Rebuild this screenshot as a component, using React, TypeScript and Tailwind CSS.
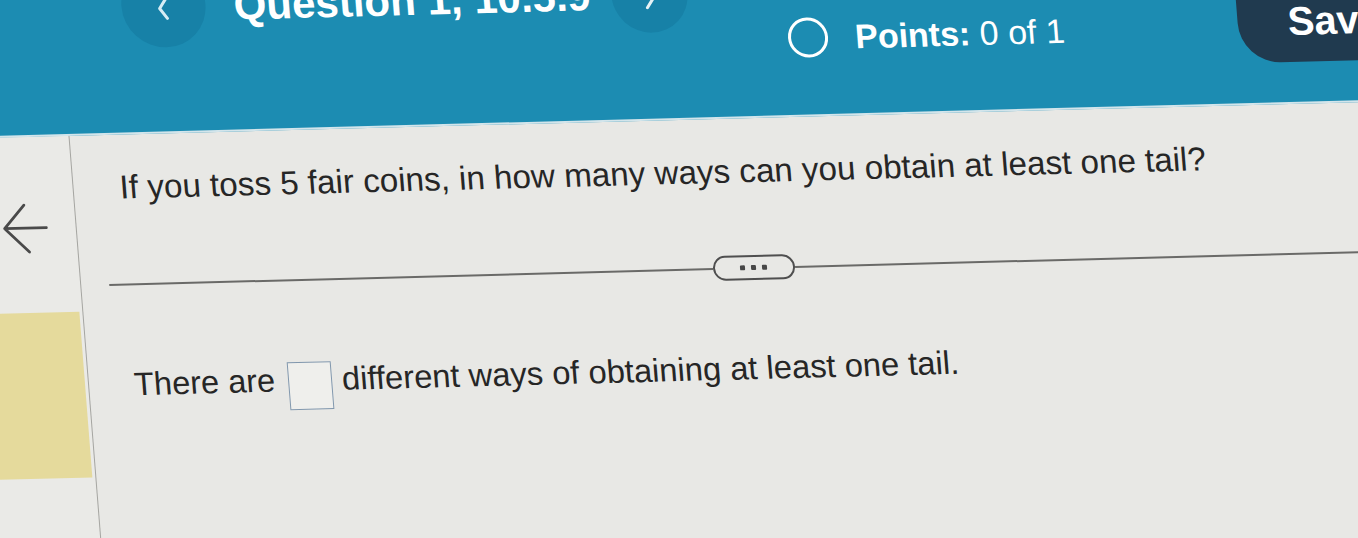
import React from "react";

export default function App() {
  return (
    <div className="w-[1358px] h-[538px] overflow-hidden bg-[#e8e8e5]">
      <div className="w-[1438px] h-[618px] -ml-[40px] -mt-[40px] rotate-[-1.5deg] skew-x-[3deg] flex flex-col font-['Liberation_Sans',Arial,sans-serif]">
        {/* Header */}
        <div className="h-[160px] shrink-0 bg-[#1c8cb2] flex items-start pl-[183px] border-b-[2px] border-[#d3e5eb]">
          <div className="w-[84px] h-[84px] -mt-[10px] rounded-full bg-[#1781a7] flex items-center justify-center shrink-0">
            <svg width="14" height="24" viewBox="0 0 14 24" className="mt-[6px]">
              <path d="M10 2 L3 12 L10 22" fill="none" stroke="#d6ecf4" strokeWidth="3" strokeLinecap="round" strokeLinejoin="round" />
            </svg>
          </div>
          <div className="w-[406px] shrink-0 pl-[28px] mt-[13px] text-[42px] leading-[42px] font-bold text-white whitespace-nowrap">
            Question 1, 10.5.9
          </div>
          <div className="w-[76px] h-[76px] -mt-[4px] rounded-full bg-[#1781a7] flex items-center justify-center shrink-0">
            <svg width="14" height="24" viewBox="0 0 14 24" className="mt-[6px]">
              <path d="M4 2 L11 12 L4 22" fill="none" stroke="#e6f2f6" strokeWidth="3" strokeLinecap="round" strokeLinejoin="round" />
            </svg>
          </div>
          <div className="ml-[97px] mt-[61px] flex items-center gap-[27px] shrink-0">
            <div className="w-[40px] h-[40px] rounded-full border-[3.5px] border-white" />
            <div className="text-[34px] leading-[34px] text-white whitespace-nowrap">
              <span className="font-bold">Points:</span> 0 of 1
            </div>
          </div>
          <div className="ml-auto w-[142px] h-[118px] rounded-bl-[40px] rounded-tl-[40px] bg-[#203a4f] pl-[50px] pt-[57px] shrink-0 overflow-hidden">
            <div className="text-[40px] leading-[40px] font-bold text-white whitespace-nowrap">Save</div>
          </div>
        </div>

        {/* Body */}
        <div className="flex-1 flex">
          <div className="w-[121px] shrink-0 border-r-[1.5px] border-[#a5a5a1] bg-[#eaeae7] flex flex-col">
            <div className="pt-[64px] pl-[46px]">
              <svg width="46" height="54" viewBox="0 0 46 54">
                <path d="M45 27 H3 M3 27 L24 4 M3 27 L26 51" fill="none" stroke="#4a4a4a" strokeWidth="2.8" strokeLinecap="round" strokeLinejoin="round" />
              </svg>
            </div>
            <div className="mt-[58px] mr-[3px] h-[166px] bg-[#e5da9c]" />
          </div>

          <div className="flex-1 flex flex-col text-[#262626]">
            <div className="pt-[36px] pl-[46px] text-[33.2px] leading-[33px] whitespace-nowrap">
              If you toss 5 fair coins, in how many ways can you obtain at least one tail?
            </div>

            <div className="mt-[68px] ml-[28px] h-[25px] flex items-center">
              <div className="flex-1 h-[2px] bg-[#6a6a68]" />
              <div className="w-[82px] h-[25px] rounded-full border-[2.5px] border-[#4f4f4f] flex items-center justify-center gap-[6px] shrink-0">
                <span className="w-[5px] h-[5px] rounded-[1px] bg-[#474747]" />
                <span className="w-[5px] h-[5px] rounded-[1px] bg-[#474747]" />
                <span className="w-[5px] h-[5px] rounded-[1px] bg-[#474747]" />
              </div>
              <div className="flex-1 h-[2px] bg-[#6a6a68]" />
            </div>

            <div className="mt-[70px] pl-[45px] flex items-start whitespace-nowrap">
              <span className="mt-[2px] text-[32.5px] leading-[32px]">There are</span>
              <span className="ml-[13px] w-[44px] h-[48px] border-[1.5px] border-[#8197ad] bg-[#efefec] shrink-0" />
              <span className="ml-[10px] mt-[2px] text-[32.7px] leading-[32px]">
                different ways of obtaining at least one tail.
              </span>
            </div>
          </div>
        </div>
      </div>
    </div>
  );
}
